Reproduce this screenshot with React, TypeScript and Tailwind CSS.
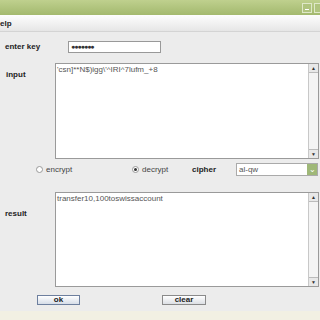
import React from 'react';

function ScrollArea({ text, height }: { text: string; height: string }) {
  return (
    <div className={`flex ${height} w-[264px] border border-[#9a9a9a] bg-white`}>
      <div className="flex-1 px-[1px] pt-[1px] text-[8px] leading-[10px] text-[#555]">{text}</div>
      <div className="flex w-[10px] flex-col justify-between border-l border-[#c8c8c8] bg-[#f4f4f4]">
        <div className="flex h-[9px] items-center justify-center border-b border-[#bbb] bg-[#e8e8e8] text-[5px] leading-none text-[#333]">▲</div>
        <div className="flex h-[9px] items-center justify-center border-t border-[#bbb] bg-[#e8e8e8] text-[5px] leading-none text-[#333]">▼</div>
      </div>
    </div>
  );
}

function Radio({ checked, label }: { checked?: boolean; label: string }) {
  return (
    <div className="flex items-center gap-[3px]">
      <span className="flex h-[7px] w-[7px] items-center justify-center rounded-full border border-[#999] bg-white">
        {checked && <span className="h-[3px] w-[3px] rounded-full bg-[#333]" />}
      </span>
      <span className="text-[8px] text-[#444]">{label}</span>
    </div>
  );
}

export default function App() {
  return (
    <div className="flex h-[320px] w-[320px] flex-col overflow-hidden bg-[#ececec] font-['Liberation_Sans',sans-serif]">
      <div className="flex h-[15px] justify-end bg-gradient-to-b from-[#bfd08e] to-[#a3b96e] pt-[3px]">
        <div className="mr-[2px] flex h-[10px] w-[10px] items-end justify-center border border-[#dfe8c8] bg-[#b0c47f] pb-[2px]">
          <span className="h-[1px] w-[4px] bg-white" />
        </div>
        <div className="h-[10px] w-[6px] border border-r-0 border-[#dfe8c8] bg-[#b0c47f]" />
      </div>
      <div className="flex h-[17px] items-center border-b border-[#d4d4d4] bg-gradient-to-b from-[#fdfdfd] to-[#e6e6e6] pt-[1px] text-[8px] font-bold text-[#222]">
        elp
      </div>
      <div className="flex flex-1 flex-col">
        <div className="mt-[9px] flex items-center">
          <span className="ml-[5px] w-[63px] text-[8px] font-bold text-[#222]">enter key</span>
          <div className="flex h-[12px] w-[93px] items-center border border-[#999] bg-white pl-[2px] text-[7px] tracking-[-1px] text-[#333]">
            ●●●●●●●
          </div>
        </div>
        <div className="mt-[10px] flex">
          <span className="ml-[6px] mt-[6px] w-[49px] text-[8px] font-bold text-[#222]">input</span>
          <ScrollArea height="h-[96px]" text={"'csn]**N$)igg\\'^IRI^7lufm_+8"} />
        </div>
        <div className="mt-[4px] flex h-[13px] items-center">
          <div className="ml-[36px] w-[96px]">
            <Radio label="encrypt" />
          </div>
          <div className="w-[60px]">
            <Radio checked label="decrypt" />
          </div>
          <span className="w-[44px] text-[8px] font-bold text-[#222]">cipher</span>
          <div className="flex h-[13px] w-[82px] items-center border border-[#aaa] bg-white">
            <span className="flex-1 pl-[2px] text-[8px] text-[#555]">al-qw</span>
            <span className="flex h-[11px] w-[10px] items-center justify-center bg-[#9fb878] text-[8px] leading-none text-white">⌄</span>
          </div>
        </div>
        <div className="mt-[16px] flex">
          <span className="ml-[5px] mt-[16px] w-[50px] text-[8px] font-bold text-[#222]">result</span>
          <ScrollArea height="h-[95px]" text="transfer10,100toswissaccount" />
        </div>
        <div className="mt-[8px] flex">
          <div className="ml-[37px] flex h-[10px] w-[43px] items-center justify-center border border-[#6d7f9e] bg-gradient-to-b from-[#ffffff] to-[#d6dde8] text-[8px] font-bold leading-none text-[#222]">
            ok
          </div>
          <div className="ml-[82px] flex h-[10px] w-[44px] items-center justify-center border border-[#8a8a8a] bg-gradient-to-b from-[#ffffff] to-[#dcdfe4] text-[8px] font-bold leading-none text-[#222]">
            clear
          </div>
        </div>
        <div className="mt-auto h-[9px] bg-[#f2f0e3]" />
      </div>
    </div>
  );
}
